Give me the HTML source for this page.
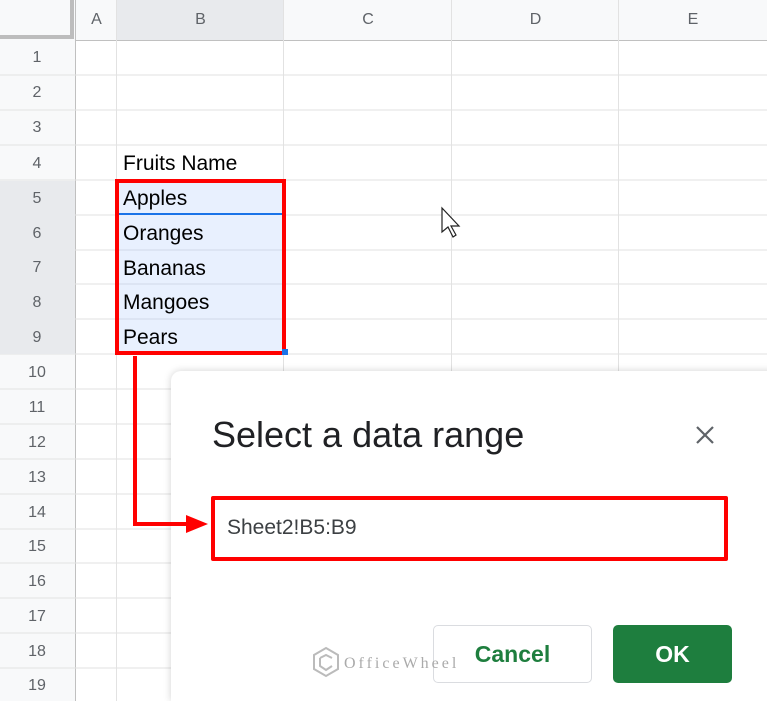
<!DOCTYPE html>
<html style="overflow:hidden;width:767px;height:701px"><head><style>
body{margin:0;width:767px;height:701px;overflow:hidden;background:#fff;font-family:"Liberation Sans",Arial,sans-serif;position:relative}
.a{position:absolute}
.hd{background:#f8f9fa;color:#5f6368;font-size:16px;text-align:center;box-sizing:border-box}
</style></head><body>
<div class="a" style="left:0;top:0;width:767px;height:40px;background:#f8f9fa;border-bottom:1px solid #c0c0c0"></div>
<div class="a" style="left:0;top:0;width:75px;height:701px;background:#f8f9fa;border-right:1px solid #c0c0c0"></div>
<div class="a" style="left:0;top:0;width:70px;height:35px;border-right:4px solid #bdbdbd;border-bottom:4px solid #bdbdbd;background:#f8f9fa"></div>
<div class="a hd" style="left:76px;top:11px;width:41px">A</div>
<div class="a" style="left:117px;top:0;width:167px;height:40px;background:#e8eaed"></div>
<div class="a hd" style="left:117px;top:11px;width:167px;background:none">B</div>
<div class="a hd" style="left:284px;top:11px;width:168px">C</div>
<div class="a hd" style="left:452px;top:11px;width:167px">D</div>
<div class="a hd" style="left:619px;top:11px;width:148px">E</div>
<svg class="a" style="left:0;top:0" width="767" height="701">
<g stroke="#e2e2e2" stroke-width="1">
<line x1="116.5" y1="0" x2="116.5" y2="701"/><line x1="283.5" y1="0" x2="283.5" y2="701"/><line x1="451.5" y1="0" x2="451.5" y2="701"/><line x1="618.5" y1="0" x2="618.5" y2="701"/>
</g>
<g stroke="#e2e2e2">
<line x1="0" y1="75" x2="767" y2="75"/><line x1="0" y1="110" x2="767" y2="110"/><line x1="0" y1="145" x2="767" y2="145"/><line x1="0" y1="180" x2="767" y2="180"/><line x1="0" y1="215" x2="767" y2="215"/><line x1="0" y1="250" x2="767" y2="250"/><line x1="0" y1="284" x2="767" y2="284"/><line x1="0" y1="319" x2="767" y2="319"/><line x1="0" y1="354" x2="767" y2="354"/><line x1="0" y1="389" x2="767" y2="389"/><line x1="0" y1="424" x2="767" y2="424"/><line x1="0" y1="459" x2="767" y2="459"/><line x1="0" y1="494" x2="767" y2="494"/><line x1="0" y1="529" x2="767" y2="529"/><line x1="0" y1="563" x2="767" y2="563"/><line x1="0" y1="598" x2="767" y2="598"/><line x1="0" y1="633" x2="767" y2="633"/><line x1="0" y1="668" x2="767" y2="668"/>
</g>
<rect x="0" y="181" width="75" height="173" fill="#e8eaed"/>
<rect x="117" y="181" width="167" height="173" fill="#e8f0fe"/>
<g stroke="#d0d8e8"><line x1="117" y1="250" x2="284" y2="250"/><line x1="117" y1="284" x2="284" y2="284"/><line x1="117" y1="319" x2="284" y2="319"/></g>
<line x1="117" y1="214" x2="284" y2="214" stroke="#1a73e8" stroke-width="2"/>
<g fill="#5f6368" font-size="16" text-anchor="middle" font-family="Liberation Sans,sans-serif">
<text x="37" y="62">1</text><text x="37" y="97">2</text><text x="37" y="132">3</text><text x="37" y="168">4</text><text x="37" y="203">5</text><text x="37" y="238">6</text><text x="37" y="272">7</text><text x="37" y="307">8</text><text x="37" y="342">9</text><text x="37" y="377">10</text><text x="37" y="412">11</text><text x="37" y="447">12</text><text x="37" y="482">13</text><text x="37" y="517">14</text><text x="37" y="551">15</text><text x="37" y="586">16</text><text x="37" y="621">17</text><text x="37" y="656">18</text><text x="37" y="690">19</text>
</g>
<g fill="#000" font-size="21" font-family="Liberation Sans,sans-serif">
<text x="123" y="170">Fruits Name</text><text x="123" y="205">Apples</text><text x="123" y="240">Oranges</text><text x="123" y="275">Bananas</text><text x="123" y="309">Mangoes</text><text x="123" y="344">Pears</text>
</g>
<rect x="117" y="181" width="167" height="172" fill="none" stroke="#ff0000" stroke-width="4"/>
<rect x="282" y="349" width="6" height="6" fill="#1a73e8"/>
<path d="M442 208 L442 232 L448 227 L453 237 L456 235 L451 226 L459 226 Z" fill="#fff" stroke="#222" stroke-width="1.2"/>
</svg>
<div class="a" style="left:171px;top:371px;width:620px;height:330px;background:#fff;border-radius:10px 0 0 0;box-shadow:0 0 8px rgba(0,0,0,.18)"></div>
<div class="a" style="left:212px;top:414px;font-size:36px;color:#202124">Select a data range</div>
<svg class="a" style="left:694px;top:424px" width="22" height="22"><path d="M3 3L19 19M19 3L3 19" stroke="#5f6368" stroke-width="2.2"/></svg>
<div class="a" style="left:211px;top:496px;width:517px;height:65px;box-sizing:border-box;border:4px solid #ff0000;border-radius:2px"></div>
<div class="a" style="left:227px;top:516px;font-size:21px;color:#3c4043">Sheet2!B5:B9</div>
<div class="a" style="left:433px;top:625px;width:159px;height:58px;box-sizing:border-box;border:1px solid #dadce0;border-radius:5px;color:#1e7e3e;font-size:23px;text-align:center;line-height:56px;font-weight:bold">Cancel</div>
<div class="a" style="left:613px;top:625px;width:119px;height:58px;background:#1e7e3e;border-radius:5px;color:#fff;font-size:23px;text-align:center;line-height:58px;font-weight:bold">OK</div>
<svg class="a" style="left:310px;top:645px" width="160" height="35">
<path d="M16 3 L28 10 L28 24 L16 31 L4 24 L4 10 Z" fill="none" stroke="#bbb" stroke-width="2"/>
<path d="M10 13 L16 10 L22 13 M10 13 L10 21 L16 25 L22 21" fill="none" stroke="#bbb" stroke-width="2"/>
<text x="34" y="23" font-family="Liberation Serif,serif" font-size="16" fill="#aaa" letter-spacing="3">OfficeWheel</text>
</svg>
<svg class="a" style="left:0;top:0;pointer-events:none" width="767" height="701">
<path d="M135 356 L135 524 L190 524" fill="none" stroke="#ff0000" stroke-width="4"/>
<path d="M186 515 L208 524 L186 533 Z" fill="#ff0000"/>
</svg>
</body></html>
